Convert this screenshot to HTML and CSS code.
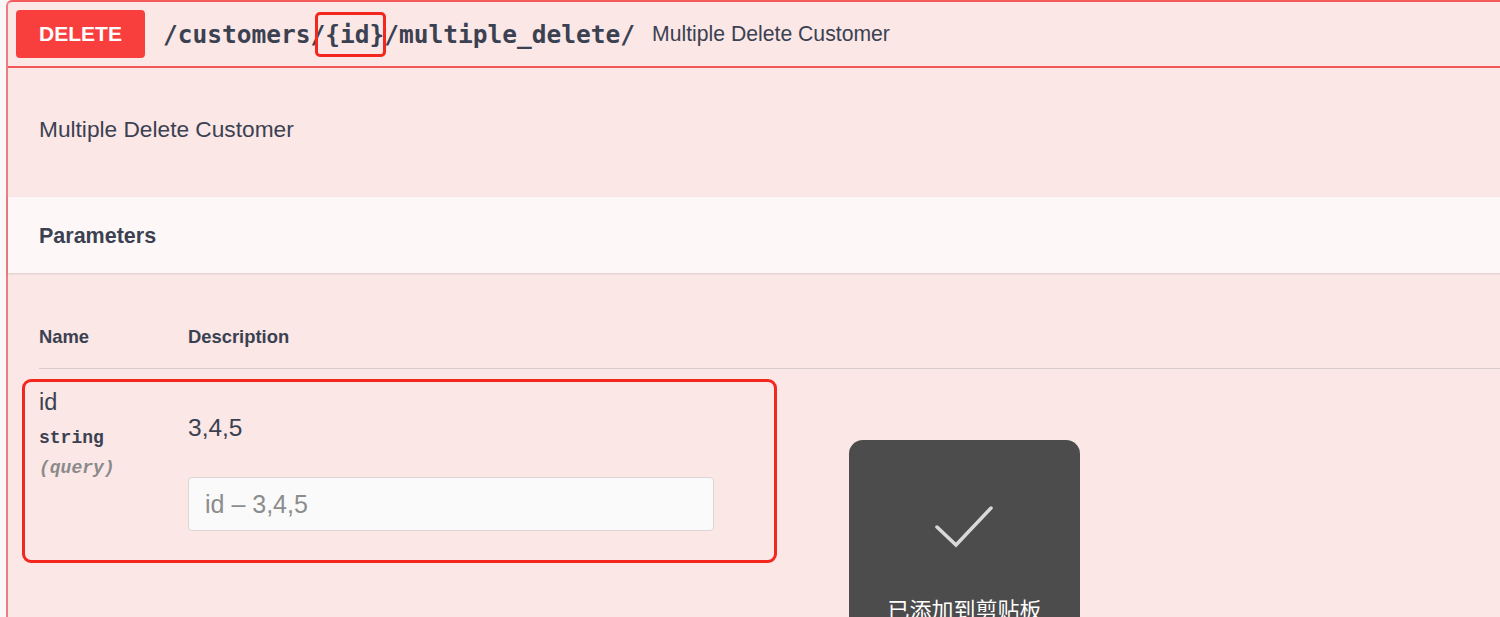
FILE: index.html
```html
<!DOCTYPE html>
<html lang="en">
<head>
<meta charset="utf-8">
<title>Swagger - Multiple Delete Customer</title>
<link rel="stylesheet" href="styles.css">
</head>
<body>
<div class="opblock">
  <div class="summary">
    <span class="method">DELETE</span>
    <span class="path">/customers/<span class="hl">{id}</span>/multiple_delete/</span>
    <span class="summary-desc">Multiple Delete Customer</span>
  </div>
  <div class="description">Multiple Delete Customer</div>
  <div class="params-header">Parameters</div>
  <div class="table-head">
    <span class="col-name">Name</span>
    <span class="col-desc">Description</span>
  </div>
  <div class="param-row">
    <div class="param-name">
      <div class="pname">id</div>
      <div class="ptype">string</div>
      <div class="pin">(query)</div>
    </div>
    <div class="param-desc">
      <div class="pvalue">3,4,5</div>
      <input class="pinput" type="text" placeholder="id – 3,4,5">
    </div>
  </div>
</div>
<div class="toast">
  <svg class="check" width="60" height="44" viewBox="0 0 60 44">
    <path d="M3 22 L22 40 L57 3" fill="none" stroke="#d9d9d9" stroke-width="3.5" stroke-linecap="round" stroke-linejoin="miter"/>
  </svg>
  <div class="toast-text">已添加到剪贴板</div>
</div>
</body>
</html>
```
FILE: styles.css
```css
html, body {
  margin: 0;
  padding: 0;
  height: 100%;
  overflow: hidden;
  background: #fdf8f8;
}
body {
  font-family: "Liberation Sans", Arial, "Noto Sans CJK SC", sans-serif;
  color: #3b4151;
}
.opblock {
  margin-left: 6px;
  margin-right: -20px;
  min-height: 640px;
  background: #fae7e6;
  border: 2px solid #ec7d81;
  border-top-color: #f45a5c;
  border-right: none;
  border-bottom: none;
  border-radius: 6px 0 0 0;
}
.summary {
  display: flex;
  align-items: center;
  height: 64px;
  padding-left: 8px;
  border-bottom: 2px solid #f3575a;
}
.method {
  display: flex;
  align-items: center;
  justify-content: center;
  width: 129px;
  height: 48px;
  background: #f93e3e;
  color: #fff;
  font-weight: 700;
  font-size: 21px;
  border-radius: 4px;
}
.path {
  margin-left: 18px;
  font-family: "DejaVu Sans Mono", "Liberation Mono", monospace;
  font-weight: 700;
  font-size: 24.5px;
  color: #3b4151;
}
.hl {
  position: relative;
}
.hl::after {
  content: "";
  position: absolute;
  left: -10px;
  right: -2px;
  top: calc(50% - 22px);
  height: 45px;
  border: 3px solid #f3271d;
  border-radius: 5px;
  box-sizing: border-box;
}
.summary-desc {
  margin-left: 17px;
  font-size: 21.2px;
  color: #3b4151;
}
.description {
  padding: 49px 31px 56px;
  font-size: 22.7px;
  line-height: 24px;
}
.params-header {
  padding: 27px 31px 25px;
  font-size: 21.5px;
  line-height: 24px;
  font-weight: 700;
  background: #fdf8f7;
  box-shadow: 0 1px 2px rgba(0, 0, 0, 0.12);
}
.table-head {
  display: flex;
  margin-left: 31px;
  padding: 54px 0 21px;
  font-size: 18.4px;
  line-height: 20px;
  font-weight: 700;
  border-bottom: 1px solid #d8cccc;
}
.col-name {
  width: 149px;
}
.param-row {
  display: flex;
  width: 755px;
  box-sizing: border-box;
  margin: 10px 0 0 14px;
  padding: 7px 0 29px 14px;
  border: 3px solid #f3271d;
  border-radius: 9px;
}
.param-name {
  width: 149px;
}
.pname {
  font-size: 23.5px;
  line-height: 26px;
}
.ptype {
  margin-top: 13px;
  font-family: "Liberation Mono", "Courier New", monospace;
  font-weight: 700;
  font-size: 18px;
  line-height: 20px;
}
.pin {
  margin-top: 10px;
  font-family: "Liberation Mono", "Courier New", monospace;
  font-style: italic;
  font-weight: 700;
  font-size: 18px;
  line-height: 20px;
  color: #8a8a8a;
}
.param-desc {
  display: flex;
  flex-direction: column;
  align-items: flex-start;
}
.pvalue {
  margin-top: 26px;
  font-size: 24.5px;
  line-height: 26px;
}
.pinput {
  margin-top: 36px;
  width: 526px;
  height: 54px;
  box-sizing: border-box;
  padding: 0 16px;
  background: #fafafa;
  border: 1px solid #dcd6d6;
  border-radius: 4px;
  font-family: "Liberation Sans", Arial, sans-serif;
  font-size: 25px;
  color: #3b4151;
  outline: none;
}
.pinput::placeholder {
  color: #8c8c8c;
}
.toast {
  position: absolute;
  left: 849px;
  top: 440px;
  width: 231px;
  height: 220px;
  background: #4c4c4c;
  border-radius: 14px;
  display: flex;
  flex-direction: column;
  align-items: center;
}
.check {
  margin-top: 65px;
  margin-left: -2px;
}
.toast-text {
  margin-top: 44px;
  color: #fff;
  font-family: "Noto Sans CJK SC", sans-serif;
  font-size: 22px;
  line-height: 30px;
}
```
